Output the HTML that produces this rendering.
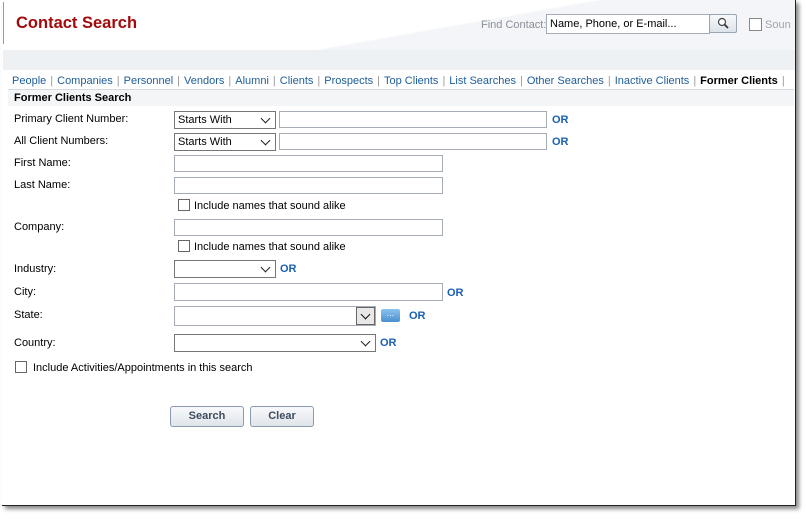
<!DOCTYPE html>
<html><head><style>
body{margin:0;width:806px;height:521px;background:#fff;position:relative;overflow:hidden;font-family:"Liberation Sans",Tahoma,sans-serif;font-size:11px;color:#000}
.a{position:absolute;white-space:nowrap}
.page{position:absolute;left:2px;top:0;width:793px;height:505px;background:#fff;border-right:1px solid #222;border-bottom:1px solid #222;box-shadow:3px 3px 4px #888}
.inp{position:absolute;height:16px;border:1px solid #a5acb5;background:#fff;box-sizing:border-box}
.sel{position:absolute;height:18px;border:1px solid #767676;background:#fff;box-sizing:border-box;font-size:11px;padding:2px 3px}
.sel:after{content:"";position:absolute;right:6px;top:3px;width:6px;height:6px;border-right:1.5px solid #222;border-bottom:1.5px solid #222;transform:rotate(45deg)}
.or{position:absolute;color:#1b5fb3;font-weight:bold;font-size:11px}
.cb{position:absolute;width:12px;height:12px;border:1px solid #666;background:#fff;box-sizing:border-box}
.lnk{color:#1e5d9a}.sep{color:#999;margin:0 4px}
.btn{position:absolute;height:21px;border:1px solid #8a9bb0;border-radius:3px;background:linear-gradient(#f8f9fb,#dfe4ea);box-sizing:border-box;text-align:center;font-weight:bold;color:#3d4c5e;font-size:11px;line-height:19px}
</style></head><body>
<div class="page"></div>
<div class="a" style="left:3px;top:0;width:792px;height:50px;background:linear-gradient(170deg,#fff 55%,#f3f5f8 56%)"></div>
<div class="a" style="left:3px;top:2px;width:1px;height:42px;background:#999"></div>
<div class="a" style="left:3px;top:50px;width:792px;height:20px;background:#eef1f4"></div>
<div class="a" style="left:16px;top:14px;font-size:16.5px;font-weight:bold;color:#a30a0a">Contact Search</div>
<div class="a" style="left:481px;top:19px;color:#8a8f96">Find Contact:</div>
<div class="inp" style="left:546px;top:14px;width:164px;height:20px;padding:3px 3px;font-size:11px">Name, Phone, or E-mail...</div>
<div class="a" style="left:709px;top:14px;width:28px;height:19px;border:1px solid #9aa6b4;border-radius:2px;background:linear-gradient(#f7f9fb,#dde3ea);box-sizing:border-box">
<svg width="26" height="17" viewBox="0 0 26 17"><circle cx="12" cy="7" r="3.5" fill="#fff" stroke="#444" stroke-width="1.2"/><line x1="14.5" y1="9.5" x2="18" y2="13" stroke="#333" stroke-width="1.8"/></svg></div>
<div class="cb" style="left:749px;top:18px;width:13px;height:13px;border-color:#888"></div>
<div class="a" style="left:765px;top:19px;color:#a0a4a9">Soun</div>
<div class="a" style="left:12px;top:75px;font-size:11px"><span class="lnk">People</span><span class="sep">|</span><span class="lnk">Companies</span><span class="sep">|</span><span class="lnk">Personnel</span><span class="sep">|</span><span class="lnk">Vendors</span><span class="sep">|</span><span class="lnk">Alumni</span><span class="sep">|</span><span class="lnk">Clients</span><span class="sep">|</span><span class="lnk">Prospects</span><span class="sep">|</span><span class="lnk">Top Clients</span><span class="sep">|</span><span class="lnk">List Searches</span><span class="sep">|</span><span class="lnk">Other Searches</span><span class="sep">|</span><span class="lnk">Inactive Clients</span><span class="sep">|</span><b>Former Clients</b><span class="sep">|</span></div>
<div class="a" style="left:8px;top:89px;width:786px;height:16px;background:#f3f5f7;border-top:1px solid #d3d9e0"></div>
<div class="a" style="left:14px;top:92px;font-weight:bold">Former Clients Search</div>
<div class="a" style="left:14px;top:113px">Primary Client Number:</div>
<div class="sel" style="left:174px;top:111px;width:102px">Starts With</div>
<div class="inp" style="left:279px;top:111px;width:268px;height:17px"></div>
<div class="or" style="left:552px;top:114px">OR</div>
<div class="a" style="left:14px;top:135px">All Client Numbers:</div>
<div class="sel" style="left:174px;top:133px;width:102px">Starts With</div>
<div class="inp" style="left:279px;top:133px;width:268px;height:17px"></div>
<div class="or" style="left:552px;top:136px">OR</div>
<div class="a" style="left:14px;top:157px">First Name:</div>
<div class="inp" style="left:174px;top:155px;width:269px;height:17px"></div>
<div class="a" style="left:14px;top:179px">Last Name:</div>
<div class="inp" style="left:174px;top:177px;width:269px;height:17px"></div>
<div class="cb" style="left:178px;top:199px"></div>
<div class="a" style="left:194px;top:200px">Include names that sound alike</div>
<div class="a" style="left:14px;top:221px">Company:</div>
<div class="inp" style="left:174px;top:219px;width:269px;height:17px"></div>
<div class="cb" style="left:178px;top:240px"></div>
<div class="a" style="left:194px;top:241px">Include names that sound alike</div>
<div class="a" style="left:14px;top:263px">Industry:</div>
<div class="sel" style="left:174px;top:260px;width:102px"></div>
<div class="or" style="left:280px;top:263px">OR</div>
<div class="a" style="left:14px;top:286px">City:</div>
<div class="inp" style="left:174px;top:283px;width:269px;height:18px"></div>
<div class="or" style="left:447px;top:287px">OR</div>
<div class="a" style="left:14px;top:309px">State:</div>
<div class="inp" style="left:174px;top:306px;width:202px;height:20px;border-color:#a5acb5"></div>
<div class="a" style="left:356px;top:307px;width:19px;height:18px;border:1px solid #666;background:#e8e8e8;box-sizing:border-box"><div style="position:absolute;left:5px;top:3px;width:6px;height:6px;border-right:1.5px solid #111;border-bottom:1.5px solid #111;transform:rotate(45deg)"></div></div>
<div class="a" style="left:381px;top:309px;width:19px;height:13px;border-radius:2px;background:linear-gradient(#8cc3ef,#4a90d0);color:#fff;font-size:9px;text-align:center;line-height:9px">...</div>
<div class="or" style="left:409px;top:310px">OR</div>
<div class="a" style="left:14px;top:337px">Country:</div>
<div class="sel" style="left:174px;top:334px;width:202px"></div>
<div class="or" style="left:380px;top:337px">OR</div>
<div class="cb" style="left:15px;top:361px"></div>
<div class="a" style="left:33px;top:362px">Include Activities/Appointments in this search</div>
<div class="btn" style="left:170px;top:406px;width:74px">Search</div>
<div class="btn" style="left:250px;top:406px;width:64px">Clear</div>
</body></html>
